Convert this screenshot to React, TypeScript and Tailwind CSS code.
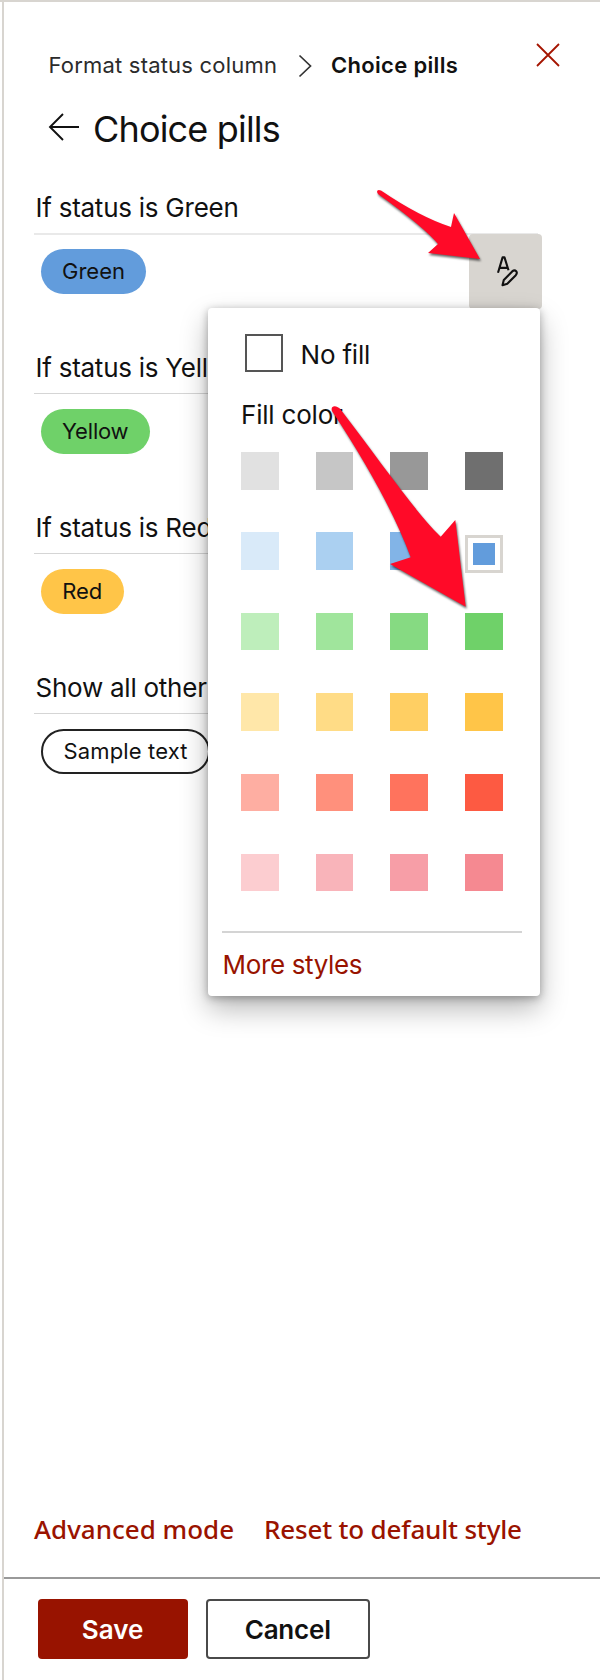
import type { ReactNode } from "react";

const swatches = [
  ["bg-[#e1e1e1]", "bg-[#c6c6c6]", "bg-[#989898]", "bg-[#6f6f6f]"],
  ["bg-[#d9eaf9]", "bg-[#abd0f1]", "bg-[#82b4e7]", "bg-[#629cdc]"],
  ["bg-[#beeebb]", "bg-[#a0e59c]", "bg-[#86da82]", "bg-[#6fd169]"],
  ["bg-[#ffe7a9]", "bg-[#ffdc86]", "bg-[#ffcf63]", "bg-[#ffc548]"],
  ["bg-[#feaea2]", "bg-[#ff907c]", "bg-[#ff735d]", "bg-[#fd5a42]"],
  ["bg-[#fccdd0]", "bg-[#f9b4ba]", "bg-[#f79ea7]", "bg-[#f58991]"],
];

function Section({ label, line, children }: { label: string; line: string; children: ReactNode }) {
  return (
    <section className="flex h-[160px] w-[538px] shrink-0 flex-col pl-[34px]">
      <div className={`flex items-center whitespace-nowrap pl-[1.5px] text-[26px] tracking-[-0.25px] ${line}`}>
        <h2>{label}</h2>
      </div>
      <div className="mb-[49px] mt-auto pl-[7px]">{children}</div>
    </section>
  );
}

export default function App() {
  return (
    <div className="relative flex h-[1680px] w-[600px] flex-col overflow-hidden border-t-2 border-[#d8d5d0] bg-white font-['Inter',sans-serif] text-[#111]">
      <div className="ml-0.5 flex min-h-0 grow flex-col border-l-2 border-[#d8d5d0]">
        <div className="-ml-1 flex min-h-0 grow flex-col">
          <header className="flex h-[181px] shrink-0 flex-col">
            <nav className="flex h-[77px] items-end pl-[48px] text-[22px] leading-7">
              <span className="w-[250px] whitespace-nowrap pl-[0.5px] tracking-[0.2px] text-[#2b2b2b]">Format status column</span>
              <svg className="mb-[1px] mr-[19px] h-6 w-3.5" viewBox="0 0 14 24" fill="none" stroke="#333" strokeWidth="1.7">
                <path d="M1.500 1.500L12.500 12L1.500 22.500" />
              </svg>
              <span className="w-[205px] whitespace-nowrap font-semibold tracking-[0.32px]">Choice pills</span>
              <svg className="mb-[12.5px] h-6 w-6" viewBox="0 0 24 24" fill="none" stroke="#a51400" strokeWidth="1.8">
                <path d="M1 1L23 23M23 1L1 23" />
              </svg>
            </nav>
            <div className="flex h-[95px] items-center pl-[48px]">
              <svg className="mr-[13px] h-7 w-8" viewBox="0 0 32 28" fill="none" stroke="#111" strokeWidth="1.9">
                <path d="M31 14H2M15 1L2 14L15 27" />
              </svg>
              <h1 className="whitespace-nowrap pt-1 text-[36px] leading-[44px] tracking-[-0.82px]">Choice pills</h1>
            </div>
          </header>
          <Section label="If status is Green" line="h-[52px] border-b-2 border-[#e9e9e9] pb-0.5">
            <span className="flex h-[45px] w-[105px] items-center justify-center rounded-full bg-[#629cdc] text-[22px]">Green</span>
          </Section>
          <Section label="If status is Yellow" line="h-[51px] border-b border-[#d5d5d5] pb-0.5">
            <span className="flex h-[45px] w-[108.5px] items-center justify-center rounded-full bg-[#6fd169] text-[22px] tracking-[-0.2px]">Yellow</span>
          </Section>
          <Section label="If status is Red" line="h-[51px] border-b border-[#d5d5d5] pb-0.5">
            <span className="flex h-[45px] w-[82.5px] items-center justify-center rounded-full bg-[#ffc548] text-[22px]">Red</span>
          </Section>
          <Section label="Show all other values" line="h-[51px] border-b border-[#d5d5d5] pb-0.5">
            <span className="flex h-[45px] w-[169px] items-center rounded-full border-2 border-[#222] pl-[20.5px] text-[22px] tracking-[0.15px]">Sample text</span>
          </Section>
          <div className="mt-auto flex h-[66px] items-start gap-[31px] whitespace-nowrap pl-[34px] font-['Noto_Sans',sans-serif] text-[26px] font-medium leading-9 text-[#9a1300]">
            <a className="w-[199px]">Advanced mode</a>
            <a className="tracking-[-0.18px]">Reset to default style</a>
          </div>
          <footer className="ml-1 flex h-[103px] shrink-0 gap-[18px] border-t-2 border-[#999] pl-[33.5px] pt-5 text-[26px] font-semibold">
            <button className="h-[60px] w-[150px] rounded-[4px] bg-[#981300] text-white">Save</button>
            <button className="h-[60px] w-[164.5px] rounded-[4px] border-2 border-[#4a4a4a] tracking-[-0.2px]">Cancel</button>
          </footer>
        </div>
      </div>

      <button className="absolute left-[469px] top-[232px] flex h-[75px] w-[73px] items-center justify-center rounded-[4px] bg-[#d8d5d0]">
        <svg className="h-[34px] w-[24px]" viewBox="0 0 24 34" fill="none" stroke="#111" strokeWidth="2.1" strokeLinejoin="round">
          <path d="M4 17.700L8.600 2.400H10.500L14.500 15.200M5.500 12.900H13.500" />
          <path d="M8.500 30.200L9.800 25L18.200 16.400Q20.500 14.500 22.200 16.200Q23.600 18 21.800 20.200L13.300 28.700Z" />
        </svg>
      </button>

      <div className="absolute left-[207.5px] top-[306px] flex h-[688px] w-[332.5px] flex-col rounded-[4px] bg-white shadow-[0_13px_28px_rgba(0,0,0,0.28),0_2px_8px_rgba(0,0,0,0.3)]">
        <label className="flex h-[64px] items-end gap-[18px] pl-[37px] text-[26px] leading-[36px]">
          <span className="h-[38px] w-[38px] border-2 border-[#555] bg-white" />
          <span className="relative top-px whitespace-nowrap tracking-[-0.2px]">No fill</span>
        </label>
        <div className="mt-[25px] h-[36px] pl-[33.5px] text-[26px] leading-[36px] tracking-[-0.2px]">Fill color</div>
        <div className="mt-[19px] grid grid-cols-[repeat(4,37.5px)] grid-rows-[repeat(6,37.5px)] gap-x-[37.2px] gap-y-[42.9px] pl-[33.6px]">
          {swatches.flatMap((row, r) =>
            row.map((color, c) =>
              r === 1 && c === 3 ? (
                <div key={color} className="mt-[3px] h-[37.5px] w-[37.5px] border-[3px] border-[#d8d5d0] p-[4.5px]">
                  <div className={`h-full w-full ${color}`} />
                </div>
              ) : (
                <div key={color} className={color} />
              ),
            ),
          )}
        </div>
        <div className="ml-[14.5px] mr-[18px] mt-[40px] h-[2px] shrink-0 bg-[#d4d4d4]" />
        <a className="mt-[14px] whitespace-nowrap pl-[15px] text-[26px] leading-[36px] tracking-[-0.35px] text-[#981300]">More styles</a>
      </div>

      <svg
        className="pointer-events-none absolute left-0 top-[-2px] h-[700px] w-[600px] drop-shadow-[1px_2px_1px_rgba(0,0,0,0.6)]"
        viewBox="0 0 600 700"
        fill="#ff0a28"
      >
        <path d="M377 192Q377 189 381 190.500Q420 217 451 227L454 213L480 259L428 253L438 244Q424 227 378 194Z" />
        <path d="M332 411C330 405 337 405 341 410C378 458 415 512 440.700 536.700L455.300 520L465.700 606.700L390 564L410.700 557.300Q388 496 332 411Z" />
      </svg>
    </div>
  );
}
